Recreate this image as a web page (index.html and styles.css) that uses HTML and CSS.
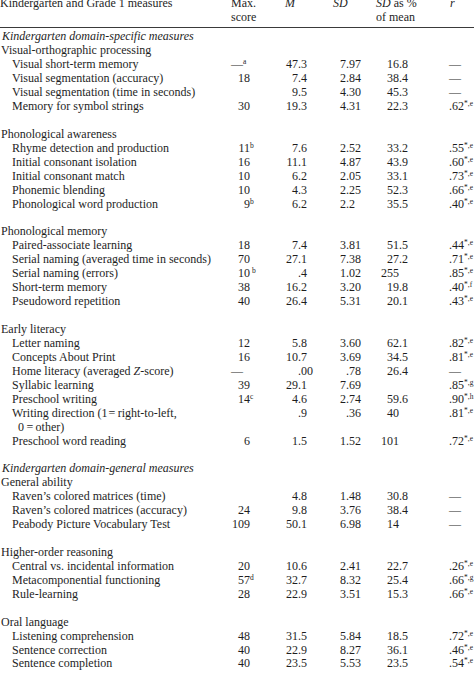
FILE: index.html
```html
<!DOCTYPE html>
<html lang="en">
<head>
<meta charset="utf-8">
<title>Kindergarten and Grade 1 measures</title>
<link rel="stylesheet" href="styles.css">
</head>
<body>
<table class="t">
<colgroup><col class="c-label"><col class="c-max"><col class="c-m"><col class="c-sd"><col class="c-pct"><col class="c-r"></colgroup>
<thead>
<tr>
<th class="lab">Kindergarten and Grade 1 measures</th>
<th class="hmax">Max.<br>score</th>
<th class="hm"><i>M</i></th>
<th class="hsd"><i>SD</i></th>
<th class="hpct"><i>SD</i> as %<br>of mean</th>
<th class="hr"><i>r</i></th>
</tr>
</thead>
<tbody>
<tr class="sec first"><td colspan="6"><i>Kindergarten domain-specific measures</i></td></tr>
<tr class="grp"><td colspan="6">Visual-orthographic processing</td></tr>
<tr><td class="item">Visual short-term memory</td><td class="mx">—<sup>a</sup></td><td class="m"><span class="i">47</span>.3</td><td class="sd"><span class="i">7</span>.97</td><td class="pc"><span class="i">16</span>.8</td><td class="r">—</td></tr>
<tr><td class="item">Visual segmentation (accuracy)</td><td class="mx"><span class="i">18</span></td><td class="m"><span class="i">7</span>.4</td><td class="sd"><span class="i">2</span>.84</td><td class="pc"><span class="i">38</span>.4</td><td class="r">—</td></tr>
<tr><td class="item">Visual segmentation (time in seconds)</td><td class="mx"></td><td class="m"><span class="i">9</span>.5</td><td class="sd"><span class="i">4</span>.30</td><td class="pc"><span class="i">45</span>.3</td><td class="r">—</td></tr>
<tr><td class="item">Memory for symbol strings</td><td class="mx"><span class="i">30</span></td><td class="m"><span class="i">19</span>.3</td><td class="sd"><span class="i">4</span>.31</td><td class="pc"><span class="i">22</span>.3</td><td class="r">.62<sup>*,e</sup></td></tr>

<tr class="grp sp"><td colspan="6">Phonological awareness</td></tr>
<tr><td class="item">Rhyme detection and production</td><td class="mx"><span class="i">11</span><sup>b</sup></td><td class="m"><span class="i">7</span>.6</td><td class="sd"><span class="i">2</span>.52</td><td class="pc"><span class="i">33</span>.2</td><td class="r">.55<sup>*,e</sup></td></tr>
<tr><td class="item">Initial consonant isolation</td><td class="mx"><span class="i">16</span></td><td class="m"><span class="i">11</span>.1</td><td class="sd"><span class="i">4</span>.87</td><td class="pc"><span class="i">43</span>.9</td><td class="r">.60<sup>*,e</sup></td></tr>
<tr><td class="item">Initial consonant match</td><td class="mx"><span class="i">10</span></td><td class="m"><span class="i">6</span>.2</td><td class="sd"><span class="i">2</span>.05</td><td class="pc"><span class="i">33</span>.1</td><td class="r">.73<sup>*,e</sup></td></tr>
<tr><td class="item">Phonemic blending</td><td class="mx"><span class="i">10</span></td><td class="m"><span class="i">4</span>.3</td><td class="sd"><span class="i">2</span>.25</td><td class="pc"><span class="i">52</span>.3</td><td class="r">.66<sup>*,e</sup></td></tr>
<tr><td class="item">Phonological word production</td><td class="mx"><span class="i">9</span><sup>b</sup></td><td class="m"><span class="i">6</span>.2</td><td class="sd"><span class="i">2</span>.2</td><td class="pc"><span class="i">35</span>.5</td><td class="r">.40<sup>*,e</sup></td></tr>

<tr class="grp sp"><td colspan="6">Phonological memory</td></tr>
<tr><td class="item">Paired-associate learning</td><td class="mx"><span class="i">18</span></td><td class="m"><span class="i">7</span>.4</td><td class="sd"><span class="i">3</span>.81</td><td class="pc"><span class="i">51</span>.5</td><td class="r">.44<sup>*,e</sup></td></tr>
<tr><td class="item">Serial naming (averaged time in seconds)</td><td class="mx"><span class="i">70</span></td><td class="m"><span class="i">27</span>.1</td><td class="sd"><span class="i">7</span>.38</td><td class="pc"><span class="i">27</span>.2</td><td class="r">.71<sup>*,e</sup></td></tr>
<tr><td class="item">Serial naming (errors)</td><td class="mx"><span class="i">10</span><sup class="gap">b</sup></td><td class="m"><span class="i"></span>.4</td><td class="sd"><span class="i">1</span>.02</td><td class="pc"><span class="i">255</span></td><td class="r">.85<sup>*,e</sup></td></tr>
<tr><td class="item">Short-term memory</td><td class="mx"><span class="i">38</span></td><td class="m"><span class="i">16</span>.2</td><td class="sd"><span class="i">3</span>.20</td><td class="pc"><span class="i">19</span>.8</td><td class="r">.40<sup>*,f</sup></td></tr>
<tr><td class="item">Pseudoword repetition</td><td class="mx"><span class="i">40</span></td><td class="m"><span class="i">26</span>.4</td><td class="sd"><span class="i">5</span>.31</td><td class="pc"><span class="i">20</span>.1</td><td class="r">.43<sup>*,e</sup></td></tr>

<tr class="grp sp"><td colspan="6">Early literacy</td></tr>
<tr><td class="item">Letter naming</td><td class="mx"><span class="i">12</span></td><td class="m"><span class="i">5</span>.8</td><td class="sd"><span class="i">3</span>.60</td><td class="pc"><span class="i">62</span>.1</td><td class="r">.82<sup>*,e</sup></td></tr>
<tr><td class="item">Concepts About Print</td><td class="mx"><span class="i">16</span></td><td class="m"><span class="i">10</span>.7</td><td class="sd"><span class="i">3</span>.69</td><td class="pc"><span class="i">34</span>.5</td><td class="r">.81<sup>*,e</sup></td></tr>
<tr><td class="item">Home literacy (averaged <i>Z</i>-score)</td><td class="mx">—</td><td class="m"><span class="i"></span>.00</td><td class="sd"><span class="i"></span>.78</td><td class="pc"><span class="i">26</span>.4</td><td class="r">—</td></tr>
<tr><td class="item">Syllabic learning</td><td class="mx"><span class="i">39</span></td><td class="m"><span class="i">29</span>.1</td><td class="sd"><span class="i">7</span>.69</td><td class="pc"></td><td class="r">.85<sup>*,g</sup></td></tr>
<tr><td class="item">Preschool writing</td><td class="mx"><span class="i">14</span><sup>c</sup></td><td class="m"><span class="i">4</span>.6</td><td class="sd"><span class="i">2</span>.74</td><td class="pc"><span class="i">59</span>.6</td><td class="r">.90<sup>*,h</sup></td></tr>
<tr><td class="item wrap">Writing direction (1&#8202;=&#8201;right-to-left,<br>0&#8201;=&#8201;other)</td><td class="mx"></td><td class="m"><span class="i"></span>.9</td><td class="sd"><span class="i"></span>.36</td><td class="pc"><span class="i">40</span></td><td class="r">.81<sup>*,e</sup></td></tr>
<tr><td class="item">Preschool word reading</td><td class="mx"><span class="i">6</span></td><td class="m"><span class="i">1</span>.5</td><td class="sd"><span class="i">1</span>.52</td><td class="pc"><span class="i">101</span></td><td class="r">.72<sup>*,e</sup></td></tr>

<tr class="sec sp"><td colspan="6"><i>Kindergarten domain-general measures</i></td></tr>
<tr class="grp"><td colspan="6">General ability</td></tr>
<tr><td class="item">Raven’s colored matrices (time)</td><td class="mx"></td><td class="m"><span class="i">4</span>.8</td><td class="sd"><span class="i">1</span>.48</td><td class="pc"><span class="i">30</span>.8</td><td class="r">—</td></tr>
<tr><td class="item">Raven’s colored matrices (accuracy)</td><td class="mx"><span class="i">24</span></td><td class="m"><span class="i">9</span>.8</td><td class="sd"><span class="i">3</span>.76</td><td class="pc"><span class="i">38</span>.4</td><td class="r">—</td></tr>
<tr><td class="item">Peabody Picture Vocabulary Test</td><td class="mx"><span class="i">109</span></td><td class="m"><span class="i">50</span>.1</td><td class="sd"><span class="i">6</span>.98</td><td class="pc"><span class="i">14</span></td><td class="r">—</td></tr>

<tr class="grp sp"><td colspan="6">Higher-order reasoning</td></tr>
<tr><td class="item">Central vs. incidental information</td><td class="mx"><span class="i">20</span></td><td class="m"><span class="i">10</span>.6</td><td class="sd"><span class="i">2</span>.41</td><td class="pc"><span class="i">22</span>.7</td><td class="r">.26<sup>*,e</sup></td></tr>
<tr><td class="item">Metacomponential functioning</td><td class="mx"><span class="i">57</span><sup>d</sup></td><td class="m"><span class="i">32</span>.7</td><td class="sd"><span class="i">8</span>.32</td><td class="pc"><span class="i">25</span>.4</td><td class="r">.66<sup>*,g</sup></td></tr>
<tr><td class="item">Rule-learning</td><td class="mx"><span class="i">28</span></td><td class="m"><span class="i">22</span>.9</td><td class="sd"><span class="i">3</span>.51</td><td class="pc"><span class="i">15</span>.3</td><td class="r">.66<sup>*,e</sup></td></tr>

<tr class="grp sp"><td colspan="6">Oral language</td></tr>
<tr><td class="item">Listening comprehension</td><td class="mx"><span class="i">48</span></td><td class="m"><span class="i">31</span>.5</td><td class="sd"><span class="i">5</span>.84</td><td class="pc"><span class="i">18</span>.5</td><td class="r">.72<sup>*,e</sup></td></tr>
<tr><td class="item">Sentence correction</td><td class="mx"><span class="i">40</span></td><td class="m"><span class="i">22</span>.9</td><td class="sd"><span class="i">8</span>.27</td><td class="pc"><span class="i">36</span>.1</td><td class="r">.46<sup>*,e</sup></td></tr>
<tr><td class="item">Sentence completion</td><td class="mx"><span class="i">40</span></td><td class="m"><span class="i">23</span>.5</td><td class="sd"><span class="i">5</span>.53</td><td class="pc"><span class="i">23</span>.5</td><td class="r">.54<sup>*,e</sup></td></tr>
</tbody>
</table>
</body>
</html>
```

FILE: styles.css
```css
html, body {
  margin: 0;
  padding: 0;
  background: #ffffff;
}

body {
  width: 474px;
  height: 676px;
  overflow: hidden;
  font-family: "Liberation Serif", "Times New Roman", serif;
  font-size: 12px;
  line-height: 13.93px;
  color: #1e1e1e;
}

.t {
  border-collapse: collapse;
  table-layout: fixed;
  width: 474px;
  margin-top: -3.2px;
}

.c-label { width: 231px; }
.c-max { width: 41px; }
.c-m { width: 48px; }
.c-sd { width: 52px; }
.c-pct { width: 73px; }
.c-r { width: 29px; }

.t th,
.t td {
  padding: 0;
  font-weight: normal;
  text-align: left;
  vertical-align: top;
  white-space: nowrap;
}

.t thead tr {
  border-bottom: 1px solid #3a3a3a;
}

.t thead th {
  padding-bottom: 2.2px;
}

.t .hm { padding-left: 13px; }
.t .hsd { padding-left: 13px; }
.t .hpct { padding-left: 4px; }
.t .hr { padding-left: 5px; }

.t .sec.first td { padding-top: 2.5px; }
.t .sec td { padding-left: 2px; }
.t .grp td { padding-left: 1px; }
.t .sp td { padding-top: 13.93px; }

.t .item { padding-left: 12px; }
.t .item.wrap { padding-left: 18px; text-indent: -6px; }

.i {
  display: inline-block;
  text-align: right;
}

.mx .i { width: 19px; }
.m .i { width: 26px; }
.sd .i { width: 26px; }
.pc .i { width: 27px; }

.t .r { padding-left: 4px; }

sup {
  font-size: 7.5px;
  line-height: 0;
  vertical-align: 4px;
}

sup.gap { margin-left: 2px; }
```
